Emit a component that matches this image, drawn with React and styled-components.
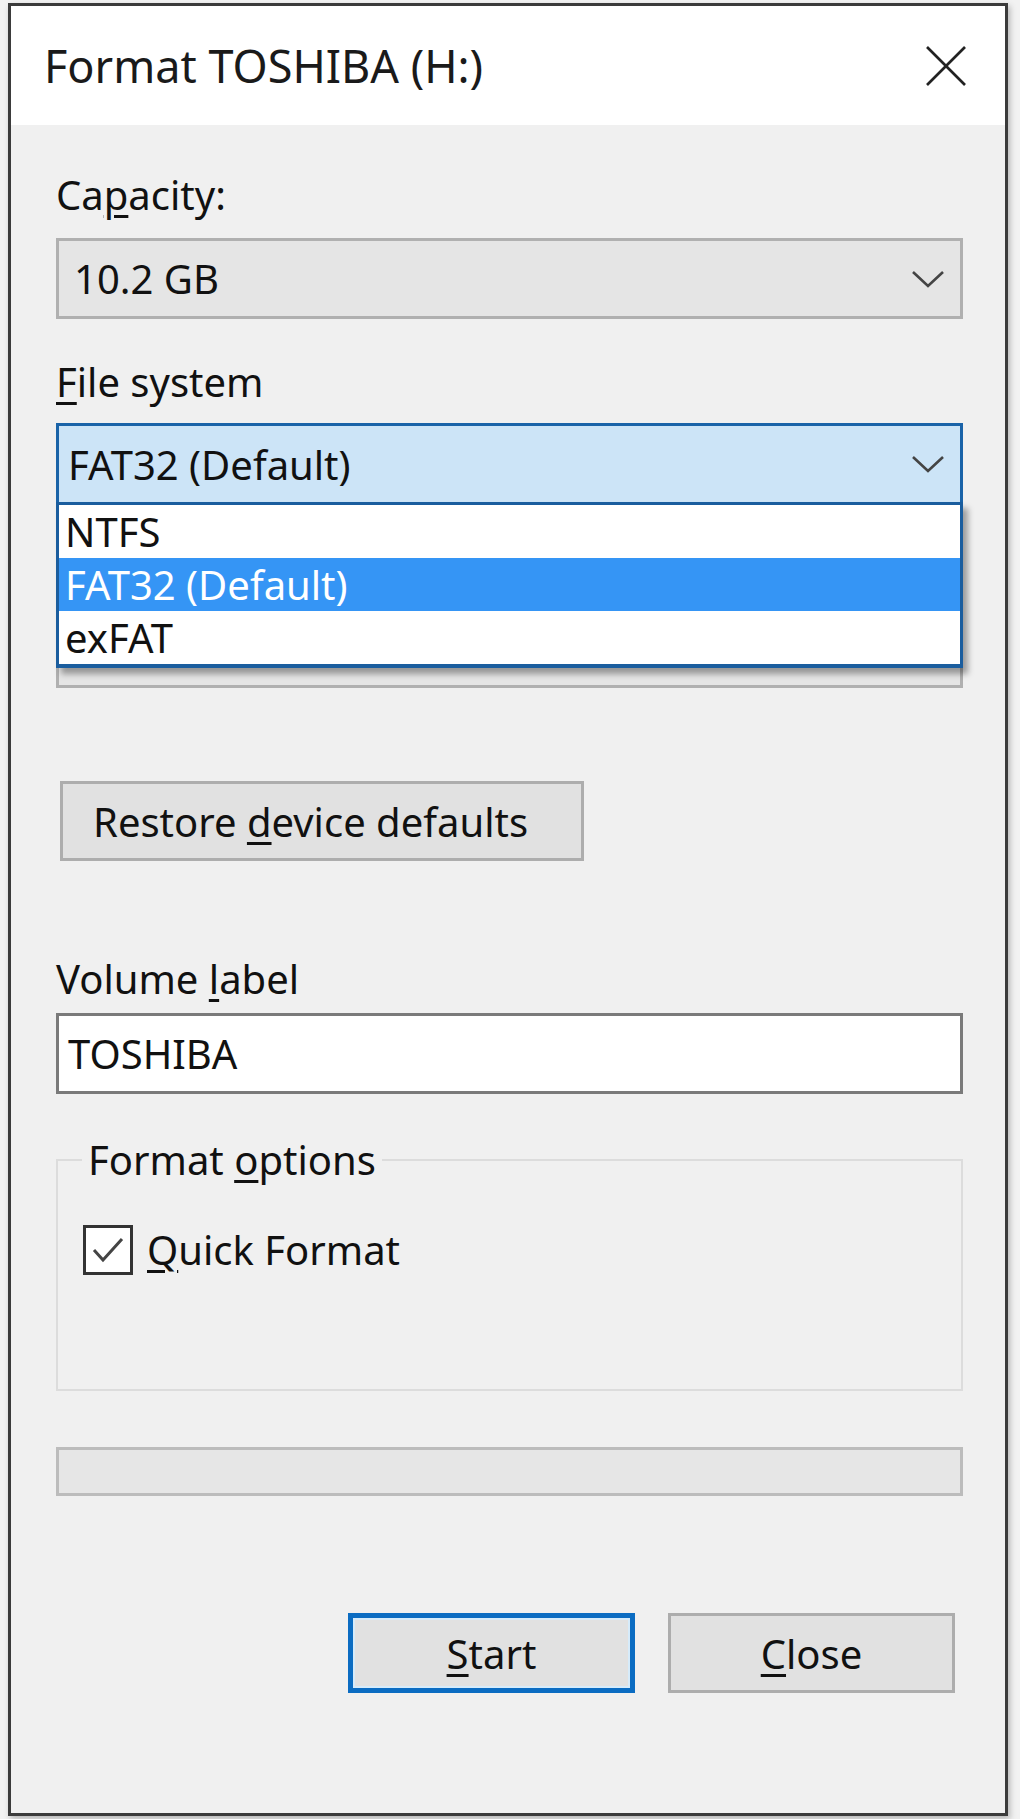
import React from 'react';
import styled, { createGlobalStyle } from 'styled-components';

const GlobalStyle = createGlobalStyle`
  html, body {
    margin: 0;
    padding: 0;
    background: #f2f2f2;
  }
  body {
    font-family: "Noto Sans", "Open Sans", "DejaVu Sans", sans-serif;
    color: #111;
  }
`;

const Page = styled.div`
  width: 1020px;
  height: 1819px;
  padding: 3px 0 0 8px;
  box-sizing: border-box;
`;

const Dialog = styled.div`
  width: 1000px;
  height: 1813px;
  box-sizing: border-box;
  border: 3px solid #3b3b3b;
  display: flex;
  flex-direction: column;
  box-shadow: 2px 3px 6px rgba(0, 0, 0, 0.25);
`;

const TitleBar = styled.div`
  height: 119px;
  background: #fff;
  display: flex;
  align-items: center;
  justify-content: space-between;
  padding: 0 38px 0 33px;
`;

const Title = styled.div`
  font-size: 45px;
  color: #1a1a1a;
`;

const CloseGlyph = styled.svg`
  width: 42px;
  height: 42px;
  display: block;
`;

const Body = styled.div`
  flex: 1;
  background: #f0f0f0;
  padding: 0 42px 0 45px;
  display: flex;
  flex-direction: column;
`;

const Label = styled.div`
  font-size: 40px;
  line-height: 52px;
  margin-top: ${p => p.$top}px;
  white-space: nowrap;
  visibility: ${p => (p.$covered ? 'hidden' : 'visible')};
`;

const Key = styled.span`
  text-decoration: underline;
  text-decoration-thickness: 3px;
  text-underline-offset: 5px;
`;

const ComboWrap = styled.div`
  position: relative;
  margin-top: ${p => p.$top}px;
`;

const Combo = styled.div`
  height: ${p => (p.$focus ? 82 : 81)}px;
  box-sizing: border-box;
  border: 3px solid ${p => (p.$focus ? '#1a63a8' : '#b0b0b0')};
  background: ${p => (p.$focus ? '#cce4f7' : '#e5e5e5')};
  display: flex;
  align-items: center;
  justify-content: space-between;
  padding: 0 15px 0 ${p => (p.$focus ? 9 : 15)}px;
  font-size: 40px;
`;

const Chevron = styled.svg`
  width: 34px;
  height: 20px;
  display: block;
`;

const List = styled.div`
  position: absolute;
  left: 0;
  right: 0;
  top: 79px;
  z-index: 2;
  background: #fff;
  border: 3px solid #1a5d9e;
  border-bottom-width: 4px;
  box-shadow: 5px 6px 6px rgba(0, 0, 0, 0.35);
`;

const Item = styled.div`
  height: 53px;
  line-height: 53px;
  padding-left: 6px;
  font-size: 40px;
  background: ${p => (p.$active ? '#3595f5' : '#fff')};
  color: ${p => (p.$active ? '#fff' : '#111')};
`;

const Button = styled.div`
  width: ${p => p.$w}px;
  height: 80px;
  box-sizing: border-box;
  border: ${p => (p.$primary ? '5px solid #0b6cc2' : '3px solid #adadad')};
  box-shadow: ${p => (p.$primary ? 'inset 0 0 0 2px #d6ebfa' : 'none')};
  background: #e1e1e1;
  display: flex;
  align-items: center;
  justify-content: center;
  font-size: 40px;
`;

const RestoreButton = styled(Button)`
  margin: 93px 0 0 4px;
  justify-content: flex-start;
  padding-left: 30px;
`;

const TextInput = styled.div`
  margin-top: 8px;
  height: 81px;
  box-sizing: border-box;
  border: 3px solid #7a7a7a;
  background: #fff;
  display: flex;
  align-items: center;
  padding-left: 9px;
  font-size: 40px;
`;

const Group = styled.fieldset`
  margin: 40px 0 0;
  padding: 0 0 112px 24px;
  border: 2px solid #dcdcdc;
  min-inline-size: 0;
`;

const Legend = styled.legend`
  padding: 0 6px;
  font-size: 40px;
  line-height: 52px;
`;

const CheckRow = styled.label`
  display: flex;
  align-items: center;
  gap: 14px;
  margin: 36px 0 0 1px;
  font-size: 40px;
`;

const Box = styled.span`
  width: 50px;
  height: 50px;
  box-sizing: border-box;
  border: 3px solid #333;
  background: #fff;
  display: flex;
  align-items: center;
  justify-content: center;
`;

const Progress = styled.div`
  margin-top: 56px;
  height: 49px;
  box-sizing: border-box;
  border: 3px solid #bcbcbc;
  background: #e6e6e6;
`;

const Actions = styled.div`
  margin: 117px 8px 0 0;
  display: flex;
  justify-content: flex-end;
  gap: 33px;
`;

const ChevronIcon = () => (
  <Chevron viewBox="0 0 34 20">
    <polyline points="2,3 17,17 32,3" fill="none" stroke="#444" strokeWidth="2.6" />
  </Chevron>
);

export default function App() {
  return (
    <>
      <GlobalStyle />
      <Page>
        <Dialog>
          <TitleBar>
            <Title>Format TOSHIBA (H:)</Title>
            <CloseGlyph viewBox="0 0 42 42">
              <line x1="2" y1="2" x2="40" y2="40" stroke="#222" strokeWidth="2.6" />
              <line x1="40" y1="2" x2="2" y2="40" stroke="#222" strokeWidth="2.6" />
            </CloseGlyph>
          </TitleBar>
          <Body>
            <Label $top={44}>
              Ca<Key>p</Key>acity:
            </Label>
            <ComboWrap $top={17}>
              <Combo>
                <span>10.2 GB</span>
                <ChevronIcon />
              </Combo>
            </ComboWrap>

            <Label $top={37}>
              <Key>F</Key>ile system
            </Label>
            <ComboWrap $top={15}>
              <Combo $focus>
                <span>FAT32 (Default)</span>
                <ChevronIcon />
              </Combo>
              <List>
                <Item>NTFS</Item>
                <Item $active>FAT32 (Default)</Item>
                <Item>exFAT</Item>
              </List>
            </ComboWrap>

            {/* allocation unit row, covered by the open list */}
            <Label $top={33} $covered aria-hidden="true">
              &nbsp;
            </Label>
            <ComboWrap $top={17}>
              <Combo>
                <span />
                <ChevronIcon />
              </Combo>
            </ComboWrap>

            <RestoreButton $w={524}>
              <span>
                Restore <Key>d</Key>evice defaults
              </span>
            </RestoreButton>

            <Label $top={92}>
              Volume <Key>l</Key>abel
            </Label>
            <TextInput>TOSHIBA</TextInput>

            <Group>
              <Legend>
                Format <Key>o</Key>ptions
              </Legend>
              <CheckRow>
                <Box>
                  <svg width="36" height="30" viewBox="0 0 36 30">
                    <polyline points="4,15 13,25 32,4" fill="none" stroke="#444" strokeWidth="3" />
                  </svg>
                </Box>
                <span>
                  <Key>Q</Key>uick Format
                </span>
              </CheckRow>
            </Group>

            <Progress />

            <Actions>
              <Button $w={287} $primary>
                <span>
                  <Key>S</Key>tart
                </span>
              </Button>
              <Button $w={287}>
                <span>
                  <Key>C</Key>lose
                </span>
              </Button>
            </Actions>
          </Body>
        </Dialog>
      </Page>
    </>
  );
}
